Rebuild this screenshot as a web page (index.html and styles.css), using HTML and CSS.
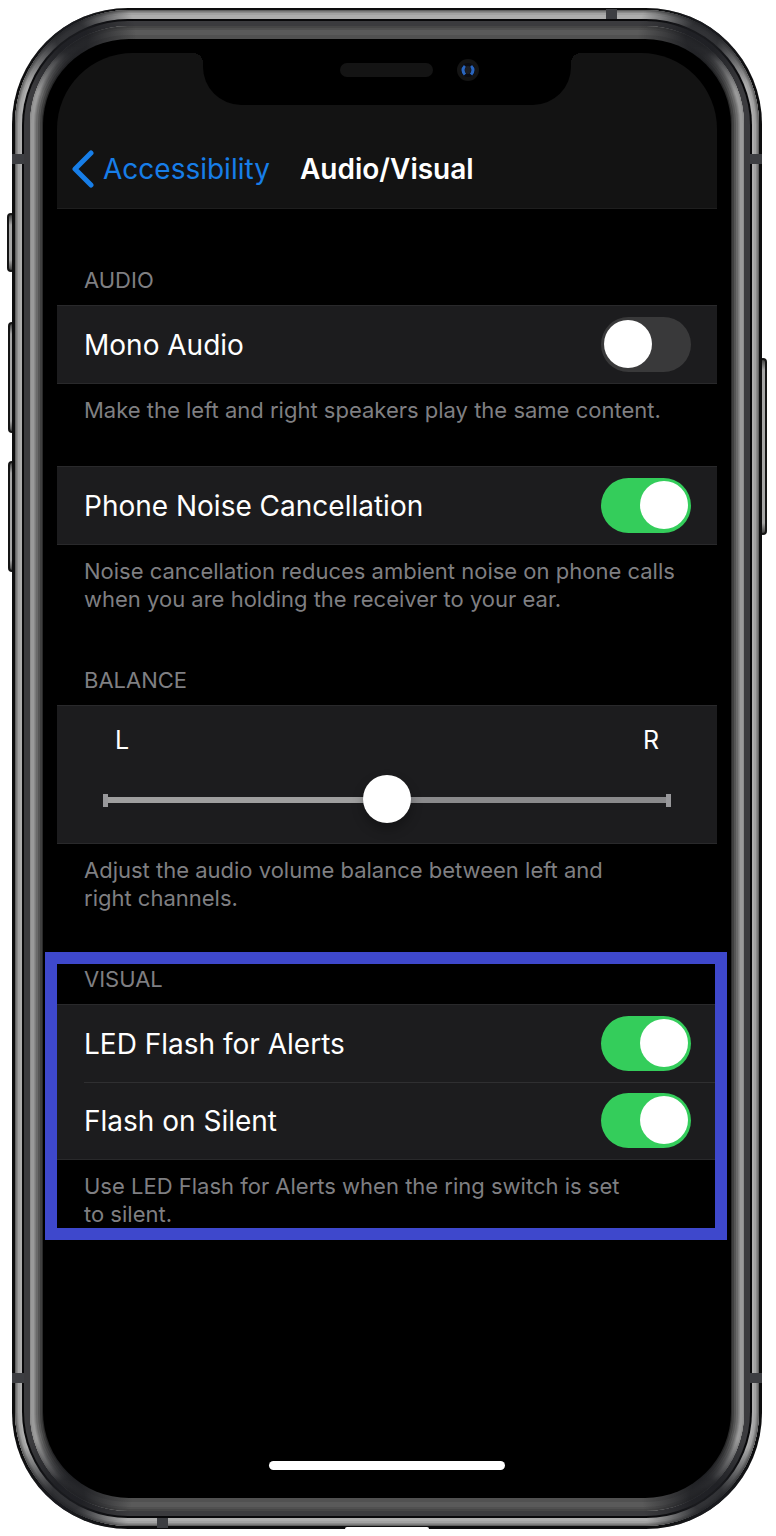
FILE: index.html
```html
<!DOCTYPE html>
<html lang="en">
<head>
<meta charset="utf-8">
<meta name="viewport" content="width=device-width, initial-scale=1">
<title>Audio/Visual</title>
<link rel="stylesheet" href="styles.css">
</head>
<body>
<div class="phone">
  <span class="key key-mute"></span>
  <span class="key key-up"></span>
  <span class="key key-down"></span>
  <span class="key key-power"></span>
  <div class="body-edge">
    <div class="rail"><div class="groove"><div class="chamfer"><div class="bezel">
      <div class="display">
        <main class="screen">
          <header class="nav">
            <div class="notch">
              <span class="speaker"></span>
              <svg class="camera" viewBox="0 0 22 22" aria-hidden="true">
                <circle cx="11" cy="11" r="11" fill="#141414"/>
                <circle cx="11" cy="11" r="7" fill="#0b0c12"/>
                <path d="M8 7Q4 11 8 15.500" fill="none" stroke="#2a66c0" stroke-width="3"/>
                <path d="M14 7Q18 11 14 15.500" fill="none" stroke="#2a66c0" stroke-width="3"/>
                <ellipse cx="11" cy="11" rx="3" ry="4" fill="#1c1e24"/>
              </svg>
            </div>
            <div class="nav-bar">
              <a class="back" href="#accessibility">
                <svg class="chevron" viewBox="0 0 24 38" aria-hidden="true"><path d="M20 3 4 19 20 35" fill="none" stroke="#177ee8" stroke-width="5" stroke-linecap="round" stroke-linejoin="round"/></svg>
                <span>Accessibility</span>
              </a>
              <h1 class="title">Audio/Visual</h1>
            </div>
          </header>

          <section class="group">
            <h2 class="heading">AUDIO</h2>
            <div class="card">
              <div class="row">
                <label for="mono">Mono Audio</label>
                <input class="switch" type="checkbox" id="mono">
              </div>
            </div>
            <p class="note">Make the left and right speakers play the same content.</p>
          </section>

          <section class="group group-plain">
            <div class="card">
              <div class="row">
                <label for="noise">Phone Noise Cancellation</label>
                <input class="switch" type="checkbox" id="noise" checked>
              </div>
            </div>
            <p class="note">Noise cancellation reduces ambient noise on phone calls<br>when you are holding the receiver to your ear.</p>
          </section>

          <section class="group">
            <h2 class="heading">BALANCE</h2>
            <div class="card balance">
              <div class="ends"><span>L</span><span>R</span></div>
              <input class="slider" type="range" min="0" max="100" value="50" aria-label="Balance">
            </div>
            <p class="note">Adjust the audio volume balance between left and<br>right channels.</p>
          </section>

          <section class="group marked">
            <h2 class="heading">VISUAL</h2>
            <div class="card">
              <div class="row">
                <label for="led">LED Flash for Alerts</label>
                <input class="switch" type="checkbox" id="led" checked>
              </div>
              <div class="row">
                <label for="silent">Flash on Silent</label>
                <input class="switch" type="checkbox" id="silent" checked>
              </div>
            </div>
            <p class="note">Use LED Flash for Alerts when the ring switch is set<br>to silent.</p>
          </section>

          <div class="home"></div>
        </main>
      </div>
    </div></div></div></div>
    <span class="shade"></span>
    <span class="band band-top"></span>
    <span class="band band-bottom"></span>
    <span class="band band-left"></span>
    <span class="band band-right"></span>
    <span class="band band-left band-low"></span>
    <span class="band band-right band-low"></span>
    <span class="port"></span>
  </div>
</div>
</body>
</html>
```
FILE: styles.css
```css
* { box-sizing: border-box; }

body {
  margin: 0;
  background: #fff;
  color: #fff;
  font-family: Inter, "Liberation Sans", sans-serif;
}

h1, h2, p { margin: 0; font-weight: 400; }

/* Phone body */
.phone {
  position: relative;
  display: grid;
  min-height: calc(100vh - 15px);
  margin: 8px 14px 7px 12px;
}

.body-edge {
  position: relative;
  display: grid;
  padding: 2px 3px 3px;
  border-radius: 116px;
  background: #0d0d0e;
}

.rail {
  display: grid;
  padding: 9px 7px 8px;
  border-radius: 114px;
  background: #777;
  box-shadow:
    inset 0 0 0 1px #606060,
    inset 0 0 0 2px #7c7c7c,
    inset 0 0 0 3px #8c8c8c,
    inset 0 0 0 5px #a2a2a2,
    inset 0 0 0 9px #adadad;
}

.groove {
  display: grid;
  padding: 2px;
  border-radius: 106px;
  background: #08080a;
}

.chamfer {
  display: grid;
  padding: 5px 6px;
  border-radius: 104px;
  background: #3b3b3e;
}

.bezel {
  position: relative;
  display: grid;
  padding: 13px;
  border-radius: 98px;
  background: #2a2a2a;
  box-shadow:
    inset 0 0 0 1px #8c8c8c,
    inset 0 0 0 4px #9a9a9a,
    inset 0 0 0 5px #8a8a8a,
    inset 0 0 0 6px #7c7c7c,
    inset 0 0 0 8px #6a6a6a,
    inset 0 0 0 10px #555,
    inset 0 0 0 12px #404040;
}

.bezel::before {
  content: "";
  position: absolute;
  inset: 0;
  border-radius: inherit;
  box-shadow:
    inset 0 0 0 2px #464646,
    inset 0 0 0 4px #505050,
    inset 0 0 0 9px #5a5a5a,
    inset 0 0 0 14px #515151;
  -webkit-mask-image: linear-gradient(#000 20px, transparent 36px, transparent calc(100% - 36px), #000 calc(100% - 20px));
  mask-image: linear-gradient(#000 20px, transparent 36px, transparent calc(100% - 36px), #000 calc(100% - 20px));
}

.display {
  position: relative;
  z-index: 2;
  display: grid;
  padding: 14px;
  border-radius: 86px;
  background: #000;
}

.shade {
  position: absolute;
  z-index: 1;
  inset: 0;
  border-radius: inherit;
  background:
    radial-gradient(circle 64px at 60px 30px, rgba(28, 29, 33, .85) 25%, transparent),
    radial-gradient(circle 64px at calc(100% - 60px) 30px, rgba(28, 29, 33, .85) 25%, transparent),
    radial-gradient(circle 64px at 56px calc(100% - 34px), rgba(28, 29, 33, .85) 25%, transparent),
    radial-gradient(circle 64px at calc(100% - 56px) calc(100% - 34px), rgba(28, 29, 33, .85) 25%, transparent);
}

.band { position: absolute; z-index: 1; width: 12px; height: 10px; background: #3d3e42; }
.band-top { top: 1px; right: 145px; width: 11px; }
.band-bottom { bottom: 1px; left: 145px; width: 11px; }
.band-left { left: 0; top: 146px; }
.band-right { right: 0; top: 146px; }
.band-low { top: auto; bottom: 146px; }

.port {
  position: absolute;
  z-index: 1;
  bottom: 0;
  left: calc(50% - 42px);
  width: 84px;
  height: 2px;
  border-radius: 8px 8px 0 0;
  background: #fff;
}

.key {
  position: absolute;
  width: 8px;
  border: 2px solid #151515;
  border-radius: 4px;
  background: linear-gradient(#444, #a6a6a6 10px, #a6a6a6 calc(100% - 10px), #444);
}
.key-mute { left: -5px; top: 205px; height: 59px; }
.key-up { left: -4px; top: 314px; height: 111px; }
.key-down { left: -4px; top: 453px; height: 111px; }
.key-power { right: -5px; top: 350px; height: 177px; }

/* Screen */
.screen {
  display: flex;
  flex-direction: column;
  min-width: 0;
  padding-bottom: 14px;
}

.nav {
  border-bottom: 1px solid #1e1e1e;
  border-radius: 76px 76px 0 0;
  background: #131313;
}

.notch {
  position: relative;
  display: flex;
  align-items: center;
  justify-content: flex-end;
  gap: 24px;
  width: 368px;
  height: 52px;
  margin: 0 auto;
  padding: 0 92px 18px 0;
  border-radius: 0 0 38px 38px;
  background: #000;
}
.notch::before, .notch::after {
  content: "";
  position: absolute;
  top: 0;
  width: 10px;
  height: 10px;
}
.notch::before { right: 100%; background: radial-gradient(circle at 0 100%, transparent 10px, #000 10px); }
.notch::after { left: 100%; background: radial-gradient(circle at 100% 100%, transparent 10px, #000 10px); }

.speaker { width: 93px; height: 14px; border-radius: 7px; background: #141414; }
.camera { width: 22px; height: 22px; }

.nav-bar { display: flex; align-items: center; gap: 30px; padding: 45px 14px 20px; }
.back { display: flex; align-items: center; gap: 8px; color: #177ee8; font-size: 28px; line-height: 36px; text-decoration: none; }
.chevron { width: 24px; height: 38px; }
.title { font-size: 28px; line-height: 36px; font-weight: 600; }

.group { position: relative; }
.group-plain { padding-top: 42px; }

.heading {
  padding: 57px 27px 11px;
  color: #7f7f82;
  font-size: 22px;
  line-height: 28px;
}
.group + .group .heading { padding-top: 53px; }

.card {
  border: solid #29292b;
  border-width: 1px 0;
  background: #1c1c1e;
}

.row {
  position: relative;
  display: flex;
  align-items: center;
  justify-content: space-between;
  padding: 11px 26px 11px 27px;
  font-size: 28px;
  line-height: 36px;
}
.row + .row::before {
  content: "";
  position: absolute;
  top: 0;
  left: 27px;
  right: 0;
  height: 1px;
  background: #2f2f31;
}

.note {
  padding: 12px 27px 0;
  color: #7f7f82;
  font-size: 22px;
  line-height: 28px;
}

.switch {
  appearance: none;
  width: 90px;
  height: 55px;
  margin: 0;
  padding: 3px;
  border-radius: 28px;
  background: #39393a;
}
.switch::before {
  content: "";
  display: block;
  width: 48px;
  height: 48px;
  border-radius: 50%;
  background: #fff;
}
.switch:checked { background: #34cd5b; }
.switch:checked::before { margin-left: 36px; }

.balance { padding: 16px 46px 20px; }
.ends { display: flex; justify-content: space-between; padding: 0 12px; font-size: 25px; line-height: 36px; }

.slider {
  appearance: none;
  display: block;
  width: 100%;
  height: 48px;
  margin: 17px 0 0;
  background:
    linear-gradient(#98989b, #98989b) 0 54% / 5px 13px no-repeat,
    linear-gradient(#98989b, #98989b) 100% 54% / 5px 13px no-repeat,
    linear-gradient(90deg, #9f9f9f 50%, #8a8a8c 50%) 0 53% / 100% 6px no-repeat;
}
.slider::-webkit-slider-thumb {
  appearance: none;
  width: 48px;
  height: 48px;
  border-radius: 50%;
  background: #fff;
  box-shadow: 0 6px 12px rgba(0, 0, 0, .3);
}

.marked::after {
  content: "";
  position: absolute;
  inset: 40px -10px -12px -12px;
  border: 12px solid #3e48cc;
  pointer-events: none;
}

.home { width: 236px; height: 9px; margin: auto auto 0; border-radius: 5px; background: #fff; }
```
